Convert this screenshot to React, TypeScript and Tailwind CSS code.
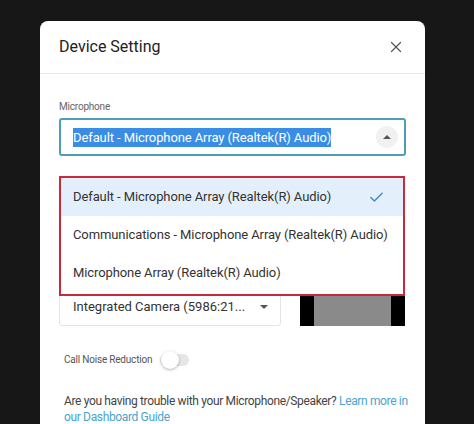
import { Check, X } from 'lucide-react';

const options = [
  'Default - Microphone Array (Realtek(R) Audio)',
  'Communications - Microphone Array (Realtek(R) Audio)',
  'Microphone Array (Realtek(R) Audio)',
];

function MicDropdown() {
  return (
    <div className="absolute left-[19px] top-[102px] w-[346px] border-2 border-[#c62a3b] bg-white pb-[2px]">
      {options.map((label, i) => (
        <div
          key={label}
          className={`flex h-[38px] items-center justify-between pl-[12px] pr-[18px] text-[13px] tracking-[-0.1px] text-[#333] whitespace-nowrap
            ${i === 0 ? 'bg-[#e3f0fb]' : 'bg-white'}
          `}
        >
          <span>{label}</span>
          {i === 0 && <Check size={17} strokeWidth={2} className="text-[#3b8cc0]" />}
        </div>
      ))}
    </div>
  );
}

export default function App() {
  return (
    <div className="h-[424px] w-[474px] overflow-hidden bg-[#171717] pl-[40px] pt-[21px] font-['Roboto',sans-serif]">
      <div className="w-[385px] h-[420px] rounded-t-[8px] bg-white">
        <header className="flex h-[53px] items-center justify-between border-b border-[#e9e9e9] pl-[19px] pr-[20px]">
          <span className="text-[16px] text-[#222]">Device Setting</span>
          <X size={18} strokeWidth={1.6} className="text-[#555]" />
        </header>

        <div className="relative px-[19px] pt-[26px]">
          <p className="text-[10px] leading-[13px] tracking-[-0.2px] text-[#666]">Microphone</p>

          <div className="mt-[5px] flex h-[38px] items-center justify-between rounded-[3px] border-2 border-[#4d9fb3] pl-[12px] pr-[6px]">
            <span className="bg-[#3a8de4] text-[13px] leading-[19px] tracking-[-0.1px] text-white">
              Default - Microphone Array (Realtek(R) Audio)
            </span>
            <div className="flex h-[22px] w-[22px] items-center justify-center rounded-full bg-[#f1f1f1]">
              <div className="h-0 w-0 border-x-[4px] border-b-[4px] border-x-transparent border-b-[#555]" />
            </div>
          </div>

          <div className="mt-[132px] flex gap-[19px]">
            <div className="flex h-[38px] w-[222px] items-center justify-between rounded-[3px] border border-[#e4e4e4] pl-[13px] pr-[12px]">
              <span className="text-[13px] text-[#333]">Integrated Camera (5986:21...</span>
              <div className="h-0 w-0 border-x-[4px] border-t-[4px] border-x-transparent border-t-[#555]" />
            </div>
            <div className="flex h-[38px] w-[105px] justify-center bg-black">
              <div className="w-[77px] bg-[#8a8a8a]" />
            </div>
          </div>

          <div className="mt-[26px] flex items-center gap-[8px] pl-[5px]">
            <span className="text-[10px] tracking-[-0.2px] text-[#555]">Call Noise Reduction</span>
            <div className="relative h-[12px] w-[29px] rounded-full bg-[#e6e6e6]">
              <div className="absolute -top-[3px] left-[1px] h-[18px] w-[18px] rounded-full bg-white shadow-[0_1px_3px_rgba(0,0,0,0.3)]" />
            </div>
          </div>

          <p className="-mr-[20px] mt-[26px] whitespace-nowrap pl-[5px] text-[12px] leading-[16px] tracking-[-0.35px] text-[#444]">
            Are you having trouble with your Microphone/Speaker?{' '}
            <span className="text-[#4ba3cf]">
              Learn more in
              <br />
              our Dashboard Guide
            </span>
          </p>

          <MicDropdown />
        </div>
      </div>
    </div>
  );
}
